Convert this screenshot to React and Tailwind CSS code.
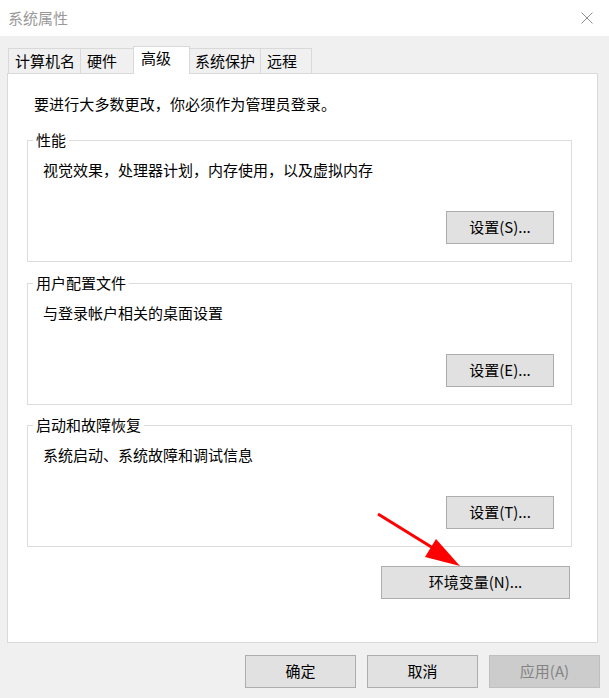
import React from "react";

const font = { fontFamily: '"Noto Sans CJK SC", "Noto Sans", sans-serif' };

function Btn({ children, className = "" }) {
  return (
    <div
      className={
        "flex items-center justify-center border border-[#adadad] bg-[#e1e1e1] pb-[2px] text-[15px] leading-[20px] text-black " +
        className
      }
    >
      {children}
    </div>
  );
}

function Group({ title, desc, btn }) {
  return (
    <fieldset className="border border-[#dcdcdc] px-0 pt-0 pb-0 m-0">
      <legend className="ml-[5px] px-[3px] text-[15px] leading-[20px] text-black">{title}</legend>
      <div className="flex flex-col pl-[15px] pr-[17px] pb-[17px]">
        <div className="mt-[10px] text-[15px] leading-[20px] text-black">{desc}</div>
        <Btn className="mt-[31px] self-end w-[108px] h-[33px]">{btn}</Btn>
      </div>
    </fieldset>
  );
}

export default function App() {
  return (
    <div className="relative w-[609px] h-[698px] bg-[#f0f0f0] overflow-hidden" style={font}>
      {/* title bar */}
      <div className="flex items-center justify-between h-[36px] bg-white pl-[8px] pr-[16px]">
        <span className="text-[15px] leading-[20px] text-[#999999]">系统属性</span>
        <svg width="12" height="12" viewBox="0 0 12 12">
          <path d="M0.5 0.5 L11.5 11.5 M11.5 0.5 L0.5 11.5" stroke="#8c8c8c" strokeWidth="1" fill="none" />
        </svg>
      </div>

      {/* tabs */}
      <div className="relative z-10 flex items-end mt-[10px] ml-[8px] -mb-px text-[15px] text-black">
        <div className="flex items-center h-[25px] mb-px w-[72px] border-t border-l border-[#d9d9d9] pl-[6px]">计算机名</div>
        <div className="flex items-center h-[25px] mb-px w-[53px] border-t border-l border-[#d9d9d9] pl-[6px]">硬件</div>
        <div className="flex items-start h-[28px] w-[57px] border-t border-l border-r border-[#d9d9d9] bg-white pl-[7px] pt-[1px] leading-[20px]">高级</div>
        <div className="flex items-center h-[25px] mb-px w-[70px] border-t border-[#d9d9d9] pl-[5px]">系统保护</div>
        <div className="flex items-center h-[25px] mb-px w-[52px] border-t border-l border-r border-[#d9d9d9] pl-[6px]">远程</div>
      </div>

      {/* panel */}
      <div className="ml-[7px] w-[591px] h-[570px] border border-[#d9d9d9] bg-white flex flex-col pl-[19px] pr-[25px] pt-[20px]">
        <div className="ml-[7px] text-[15px] leading-[20px] text-black tracking-[0.1px]">要进行大多数更改，你必须作为管理员登录。</div>
        <div className="mt-[16px]">
          <Group title="性能" desc="视觉效果，处理器计划，内存使用，以及虚拟内存" btn="设置(S)..." />
        </div>
        <div className="mt-[11px]">
          <Group title="用户配置文件" desc="与登录帐户相关的桌面设置" btn="设置(E)..." />
        </div>
        <div className="mt-[10px]">
          <Group title="启动和故障恢复" desc="系统启动、系统故障和调试信息" btn="设置(T)..." />
        </div>
        <Btn className="mt-[19px] self-end mr-[2px] w-[189px] h-[33px]">环境变量(N)...</Btn>
      </div>

      {/* bottom buttons */}
      <div className="flex justify-end gap-[11px] mt-[12px] pr-[9px]">
        <Btn className="w-[111px] h-[33px]">确定</Btn>
        <Btn className="w-[111px] h-[33px]">取消</Btn>
        <div className="flex items-center justify-center w-[111px] h-[33px] border border-[#bfbfbf] bg-[#cccccc] pb-[2px] text-[15px] leading-[20px] text-[#838383]">
          应用(A)
        </div>
      </div>

      {/* red arrow annotation */}
      <svg className="absolute left-0 top-0 pointer-events-none" width="609" height="698">
        <line x1="378" y1="514" x2="433" y2="548" stroke="#ff0000" strokeWidth="3" />
        <polygon points="460,566 425,557 436,539" fill="#ff0000" />
      </svg>
    </div>
  );
}
